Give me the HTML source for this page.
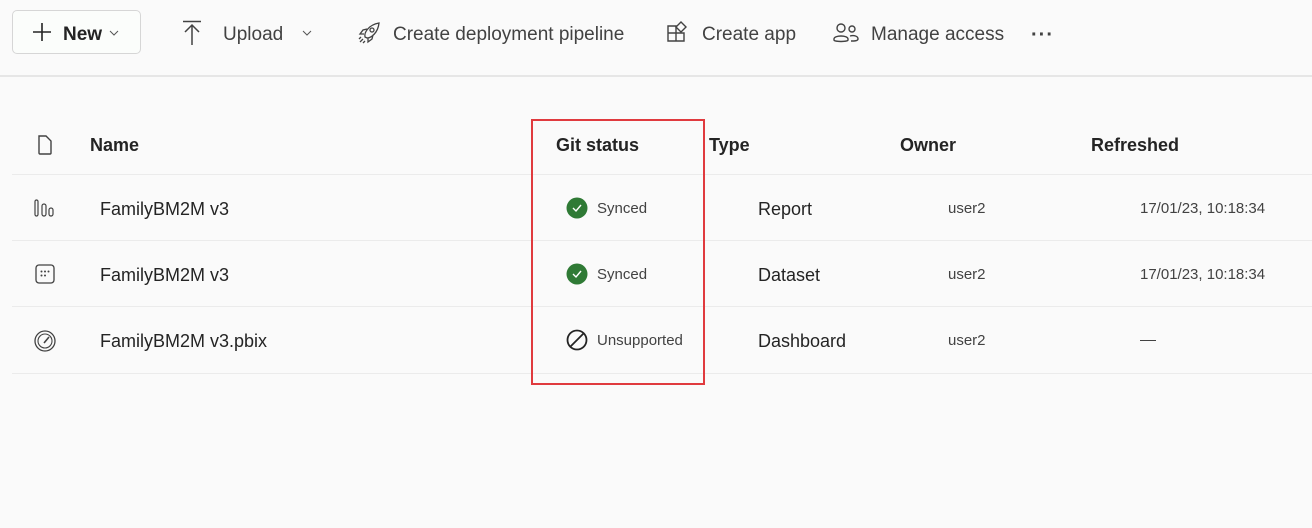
<!DOCTYPE html>
<html><head><meta charset="utf-8"><style>
*{margin:0;padding:0;box-sizing:border-box}
body{width:1312px;height:528px;background:#fafafa;font-family:"Liberation Sans",sans-serif;color:#242424;position:relative;overflow:hidden}
.a{position:absolute;white-space:nowrap}
.tb{font-size:19px;color:#424242}
.h{font-size:18px;font-weight:bold;color:#242424}
.r{font-size:18px;color:#242424}
.s{font-size:15px;color:#424242}
.line{position:absolute;left:12px;right:0;height:1px;background:#ebebeb}
svg{position:absolute}
</style></head><body>
<div class="a" style="left:12px;top:10px;width:129px;height:44px;border:1px solid #d6d6d6;border-radius:5px;background:#fbfdfb"></div>
<svg style="left:32px;top:22px" width="20" height="20" viewBox="0 0 20 20"><path d="M10 1v18M1 10h18" stroke="#242424" stroke-width="1.6"/></svg>
<div class="a" style="left:63px;top:24px;font-size:19px;font-weight:bold">New</div>
<svg style="left:109px;top:30px" width="10" height="6" viewBox="0 0 10 6"><path d="M1 1l4 4 4-4" stroke="#555" fill="none"/></svg>
<svg style="left:182px;top:20px" width="20" height="26" viewBox="0 0 20 26"><path d="M1 1.5h18M10 5v20M3 12l7-7 7 7" stroke="#424242" stroke-width="1.5" fill="none"/></svg>
<div class="a tb" style="left:223px;top:24px">Upload</div>
<svg style="left:302px;top:30px" width="10" height="6" viewBox="0 0 10 6"><path d="M1 1l4 4 4-4" stroke="#555" fill="none"/></svg>
<svg style="left:357px;top:21px" width="24" height="24" viewBox="0 0 24 24"><path d="M8 16c-1-4 3-12 14-14-1 10-8 15-12 15zM10 8l-4 1-3 4 4 0M16 14l-1 4-4 3 0-4M6 18l-3 3M8 20l-2 2M4 16l-2 2" stroke="#424242" stroke-width="1.3" fill="none"/><circle cx="15" cy="9" r="2" stroke="#424242" stroke-width="1.3" fill="none"/></svg>
<div class="a tb" style="left:393px;top:24px">Create deployment pipeline</div>
<svg style="left:666px;top:21px" width="22" height="22" viewBox="0 0 22 22"><path d="M2 5h8v15H2zM2 12h16v8h-8M10 12V20" stroke="#424242" stroke-width="1.4" fill="none"/><path d="M15 1l5 5-5 5-5-5z" stroke="#424242" stroke-width="1.4" fill="none"/></svg>
<div class="a tb" style="left:702px;top:24px">Create app</div>
<svg style="left:833px;top:22px" width="26" height="22" viewBox="0 0 26 22"><circle cx="8" cy="6" r="4" stroke="#424242" stroke-width="1.4" fill="none"/><circle cx="19" cy="7" r="3" stroke="#424242" stroke-width="1.4" fill="none"/><path d="M1 17c0-4 14-4 14 0v1c0 2-14 2-14 0z M17 14c4-1 8 0 8 3 0 2-4 2-7 2" stroke="#424242" stroke-width="1.4" fill="none"/></svg>
<div class="a tb" style="left:871px;top:24px">Manage access</div>
<div class="a" style="left:1031px;top:24px;font-size:20px;font-weight:bold;color:#424242;letter-spacing:1px">···</div>
<div class="a" style="left:0;top:75px;width:1312px;height:2px;background:#e6e6e6"></div>

<svg style="left:37px;top:135px" width="16" height="20" viewBox="0 0 16 20"><path d="M2 1h7l5 5v12c0 .6-.4 1-1 1H3c-.6 0-1-.4-1-1z" stroke="#424242" stroke-width="1.4" fill="none"/></svg>
<div class="a h" style="left:90px;top:135px">Name</div>
<div class="a h" style="left:556px;top:135px">Git status</div>
<div class="a h" style="left:709px;top:135px">Type</div>
<div class="a h" style="left:900px;top:135px">Owner</div>
<div class="a h" style="left:1091px;top:135px">Refreshed</div>
<div class="line" style="top:174px"></div>
<div class="line" style="top:240px"></div>
<div class="line" style="top:306px"></div>
<div class="line" style="top:373px"></div>

<svg style="left:34px;top:199px" width="22" height="18" viewBox="0 0 22 18"><rect x="1" y="1" width="3" height="16" rx="1.5" stroke="#424242" stroke-width="1.2" fill="none"/><rect x="8" y="5" width="4" height="12" rx="2" stroke="#424242" stroke-width="1.2" fill="none"/><rect x="15" y="9" width="4" height="8" rx="2" stroke="#424242" stroke-width="1.2" fill="none"/></svg>
<div class="a r" style="left:100px;top:199px">FamilyBM2M v3</div>
<svg style="left:566px;top:197px" width="22" height="22"><circle cx="11" cy="11" r="10.5" fill="#2f7a35"/><path d="M7 11l3 3 5-6" stroke="#fff" stroke-width="1.4" fill="none"/></svg>
<div class="a s" style="left:597px;top:200px">Synced</div>
<div class="a r" style="left:758px;top:199px">Report</div>
<div class="a s" style="left:948px;top:200px">user2</div>
<div class="a s" style="left:1140px;top:200px">17/01/23, 10:18:34</div>

<svg style="left:35px;top:264px" width="20" height="20" viewBox="0 0 20 20"><rect x="1" y="1" width="18" height="18" rx="3" stroke="#424242" stroke-width="1.3" fill="none"/><g fill="#424242"><circle cx="6.5" cy="7.5" r="1"/><circle cx="10" cy="7.5" r="1"/><circle cx="13.5" cy="7.5" r="1"/><circle cx="6.5" cy="11.5" r="1"/><circle cx="10" cy="11.5" r="1"/></g></svg>
<div class="a r" style="left:100px;top:265px">FamilyBM2M v3</div>
<svg style="left:566px;top:263px" width="22" height="22"><circle cx="11" cy="11" r="10.5" fill="#2f7a35"/><path d="M7 11l3 3 5-6" stroke="#fff" stroke-width="1.4" fill="none"/></svg>
<div class="a s" style="left:597px;top:266px">Synced</div>
<div class="a r" style="left:758px;top:265px">Dataset</div>
<div class="a s" style="left:948px;top:266px">user2</div>
<div class="a s" style="left:1140px;top:266px">17/01/23, 10:18:34</div>

<svg style="left:34px;top:330px" width="22" height="22" viewBox="0 0 22 22"><circle cx="11" cy="11" r="10" stroke="#424242" stroke-width="1.3" fill="none"/><circle cx="11" cy="11" r="7" stroke="#424242" stroke-width="1.1" fill="none"/><path d="M10 13l5-6" stroke="#424242" stroke-width="1.6"/></svg>
<div class="a r" style="left:100px;top:331px">FamilyBM2M v3.pbix</div>
<svg style="left:566px;top:329px" width="22" height="22" viewBox="0 0 22 22"><circle cx="11" cy="11" r="9.5" stroke="#242424" stroke-width="1.8" fill="none"/><path d="M4.5 17.5l13-13" stroke="#242424" stroke-width="1.8"/></svg>
<div class="a s" style="left:597px;top:332px">Unsupported</div>
<div class="a r" style="left:758px;top:331px">Dashboard</div>
<div class="a s" style="left:948px;top:332px">user2</div>
<div class="a" style="left:1140px;top:340px;width:16px;height:1px;background:#424242"></div>

<div class="a" style="left:531px;top:119px;width:174px;height:266px;border:2px solid #e03a3e"></div>
</body></html>
